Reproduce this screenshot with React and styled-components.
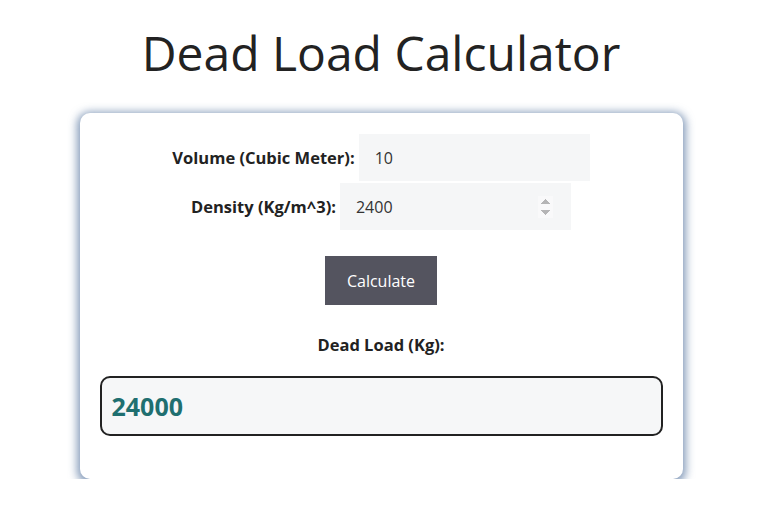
import React, { useState } from "react";
import styled, { createGlobalStyle } from "styled-components";

const GlobalStyle = createGlobalStyle`
  body {
    margin: 0;
    background: #ffffff;
    font-family: "Open Sans", "Noto Sans", sans-serif;
    color: #222;
  }
`;

const Page = styled.main`
  display: flex;
  flex-direction: column;
  align-items: center;
  padding-right: 6px;
`;

const Title = styled.h1`
  margin: 23px 0 30px;
  font-size: 48px;
  font-weight: 400;
  line-height: 60px;
  color: #222;
`;

const Card = styled.section`
  width: 603px;
  box-sizing: border-box;
  padding: 21px 20px 43px;
  border-radius: 10px;
  background: #fff;
  box-shadow: 0 2px 9px 3px rgba(70, 105, 150, 0.65);
  display: flex;
  flex-direction: column;
  align-items: center;
`;

const Row = styled.div`
  display: flex;
  align-items: center;
  gap: 4px;
  margin-bottom: 2px;
`;

const Label = styled.label`
  font-size: 16.5px;
  font-weight: 700;
  color: #222;
`;

const Input = styled.input`
  width: 231px;
  height: 47px;
  box-sizing: border-box;
  border: none;
  background: #f5f6f7;
  padding: 0 18px 0 16px;
  font-family: inherit;
  font-size: 16px;
  color: #333;
  outline: none;

  &::-webkit-inner-spin-button {
    opacity: 0.6;
  }
`;

const Button = styled.button`
  margin-top: 24px;
  width: 112px;
  height: 49px;
  border: none;
  background: #54545f;
  color: #fff;
  font-family: inherit;
  font-size: 16px;
  cursor: pointer;
`;

const ResultLabel = styled.div`
  margin-top: 28px;
  font-size: 16.5px;
  font-weight: 700;
`;

const Result = styled.div`
  margin-top: 20px;
  align-self: stretch;
  height: 60px;
  box-sizing: border-box;
  border: 2px solid #222;
  border-radius: 10px;
  background: #f6f7f8;
  display: flex;
  align-items: center;
  padding: 0 10px;
  font-size: 25px;
  font-weight: 700;
  color: #1f6f70;
`;

export default function App() {
  const [volume, setVolume] = useState("10");
  const [density, setDensity] = useState("2400");
  const [load, setLoad] = useState(24000);

  return (
    <Page>
      <GlobalStyle />
      <Title>Dead Load Calculator</Title>
      <Card>
        <Row>
          <Label>Volume (Cubic Meter):</Label>
          <Input value={volume} onChange={(e) => setVolume(e.target.value)} />
        </Row>
        <Row>
          <Label>Density (Kg/m^3):</Label>
          <Input
            type="number"
            value={density}
            onChange={(e) => setDensity(e.target.value)}
          />
        </Row>
        <Button onClick={() => setLoad(Number(volume) * Number(density))}>
          Calculate
        </Button>
        <ResultLabel>Dead Load (Kg):</ResultLabel>
        <Result>{load}</Result>
      </Card>
    </Page>
  );
}
